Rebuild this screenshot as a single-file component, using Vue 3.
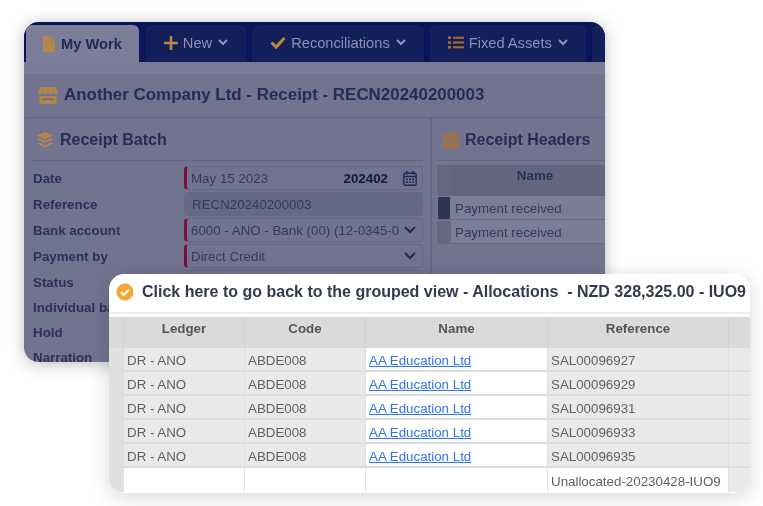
<script setup>
const nav = [
  { label: 'New', icon: 'plus' },
  { label: 'Reconciliations', icon: 'check' },
  { label: 'Fixed Assets', icon: 'list' },
]
const fields = [
  { label: 'Date', value: 'May 15 2023', kind: 'date', req: true },
  { label: 'Reference', value: 'RECN20240200003', kind: 'ro' },
  { label: 'Bank account', value: '6000 - ANO - Bank (00) (12-0345-0', kind: 'sel', req: true },
  { label: 'Payment by', value: 'Direct Credit', kind: 'sel', req: true },
  { label: 'Status', value: '', kind: 'plain' },
  { label: 'Individual bank', value: '', kind: 'plain', tight: true },
  { label: 'Hold', value: '', kind: 'plain', tight: true },
  { label: 'Narration', value: '', kind: 'plain', tight: true },
]
const refs = ['SAL00096927', 'SAL00096929', 'SAL00096931', 'SAL00096933', 'SAL00096935']
</script>

<template>
  <div class="stage">
    <section class="win back">
      <nav class="bar">
        <div class="tab active">
          <svg class="ic" width="12" height="16" viewBox="0 0 12 16"><path d="M0 1.5A1.5 1.5 0 0 1 1.5 0H7v4.5H12V14.5A1.5 1.5 0 0 1 10.5 16h-9A1.500 1.500 0 0 1 0 14.500zM8 0l4 3.600H8z" fill="#b3864a"/></svg>
          <span>My Work</span>
        </div>
        <div v-for="n in nav" :key="n.label" class="tab">
          <svg v-if="n.icon === 'plus'" class="ic" width="14" height="14" viewBox="0 0 14 14"><path d="M7 0v14M0 7h14" stroke="#b98a3c" stroke-width="2.6"/></svg>
          <svg v-else-if="n.icon === 'check'" class="ic" width="16" height="13" viewBox="0 0 16 13"><path d="M1.500 6.500l4.600 4.600L14.500 2" fill="none" stroke="#b98a3c" stroke-width="3"/></svg>
          <svg v-else class="ic" width="16" height="13" viewBox="0 0 16 13"><path d="M0 .5h3v2.400H0zM0 5.300h3v2.400H0zM0 10.100h3v2.400H0z" fill="#ad6a32"/><path d="M5 1.700h11M5 6.500h11M5 11.300h11" stroke="#ad6a32" stroke-width="2"/></svg>
          <span class="tl">{{ n.label }}</span>
          <svg class="chev" width="10" height="7" viewBox="0 0 10 7"><path d="M1 1l4 4 4-4" fill="none" stroke="#9296b4" stroke-width="2"/></svg>
        </div>
        <div class="tab stub"></div>
      </nav>
      <div class="band"></div>
      <div class="page">
        <h1 class="title">
          <svg width="20" height="17" viewBox="0 0 20 17"><path d="M2.500 0h15L20 5a2.600 2.600 0 0 1-5 .6 2.800 2.800 0 0 1-5 0 2.800 2.800 0 0 1-5 0A2.600 2.600 0 0 1 0 5z" fill="#b3864a"/><path d="M1.500 9h17v6.500a1.500 1.500 0 0 1-1.500 1.500H3a1.500 1.500 0 0 1-1.500-1.500zM4 11.200v2h12v-2z" fill="#b3864a"/></svg>
          <span>Another Company Ltd - Receipt - RECN20240200003</span>
        </h1>
        <div class="cols">
          <div class="batch">
            <h2 class="sub">
              <svg width="16" height="16" viewBox="0 0 16 16"><path d="M8 0l8 3.600-8 3.600L0 3.600z" fill="#b3864a"/><path d="M0 7.300l2.200-1 5.800 2.600 5.800-2.600 2.200 1-8 3.600z" fill="#b3864a"/><path d="M0 11.600l2.200-1 5.800 2.600 5.800-2.600 2.200 1-8 3.900z" fill="#b3864a"/></svg>
              <span>Receipt Batch</span>
            </h2>
            <div v-for="f in fields" :key="f.label" class="row" :class="{ tight: f.tight }">
              <label class="lab">{{ f.label }}</label>
              <div v-if="f.kind !== 'plain'" class="inp" :class="[f.kind, { req: f.req }]">
                <span class="val">{{ f.value }}</span>
                <template v-if="f.kind === 'date'">
                  <b class="period">202402</b>
                  <svg width="14" height="15" viewBox="0 0 14 15"><rect x=".8" y="2.300" width="12.400" height="11.900" rx="1.500" fill="none" stroke="#1e2a58" stroke-width="1.400"/><path d="M.8 5.500h12.400" stroke="#1e2a58" stroke-width="1.600"/><path d="M3.700 0v3.500M10.300 0v3.500" stroke="#1e2a58" stroke-width="1.600"/><path d="M3 7.500h2v1.400H3zM6 7.500h2v1.400H6zM9 7.500h2v1.400H9zM3 10.300h2v1.400H3zM6 10.300h2v1.400H6zM9 10.300h2v1.400H9z" fill="#1e2a58"/></svg>
                </template>
                <svg v-if="f.kind === 'sel'" class="selchev" width="12" height="8" viewBox="0 0 12 8"><path d="M1 1l5 5 5-5" fill="none" stroke="#1e2a58" stroke-width="2"/></svg>
              </div>
              <div v-else-if="f.label === 'Status'" class="inp"></div>
            </div>
          </div>
          <div class="headers">
            <h2 class="sub">
              <svg width="16" height="15" viewBox="0 0 16 15"><path d="M0 0h4.600v4.200H0zM5.700 0h4.600v4.200H5.700zM11.400 0H16v4.200h-4.600zM0 5.400h4.600v4.200H0zM5.700 5.400h4.600v4.200H5.700zM11.400 5.400H16v4.200h-4.600zM0 10.800h4.600V15H0zM5.700 10.800h4.600V15H5.700zM11.400 10.800H16V15h-4.600z" fill="#a9702f"/></svg>
              <span>Receipt Headers</span>
            </h2>
            <div class="hgrid">
              <div class="hhead"><i></i><b>Name</b></div>
              <div class="hrow"><i class="mark"></i><span>Payment received</span></div>
              <div class="hrow"><i></i><span>Payment received</span></div>
            </div>
          </div>
        </div>
      </div>
    </section>

    <section class="win front">
      <header class="fhead">
        <svg width="18" height="18" viewBox="0 0 18 18"><circle cx="9" cy="9" r="8.500" fill="#f5a733"/><path d="M5 9.300l2.800 2.700L13 6.600" fill="none" stroke="#fff" stroke-width="2"/></svg>
        <span>Click here to go back to the grouped view - Allocations&nbsp; - NZD 328,325.00 - IUO9</span>
      </header>
      <div class="grid">
        <div class="gr gh">
          <i></i><b>Ledger</b><b>Code</b><b>Name</b><b>Reference</b><em></em>
        </div>
        <div v-for="r in refs" :key="r" class="gr">
          <i></i><span>DR - ANO</span><span>ABDE008</span><span class="nm"><a href="#">AA Education Ltd</a></span><span>{{ r }}</span><em></em>
        </div>
        <div class="gr last">
          <i></i><span></span><span></span><span></span><span>Unallocated-20230428-IUO9</span><em></em>
        </div>
      </div>
    </section>
  </div>
</template>

<style scoped>
.stage {
  position: relative;
  width: 763px;
  height: 506px;
  overflow: hidden;
  background: #fff;
  font-family: "Liberation Sans", Arial, sans-serif;
  filter: blur(.3px);
}
.win {
  position: absolute;
  overflow: hidden;
  border-radius: 15px;
}
.back {
  left: 24px;
  top: 22px;
  width: 581px;
  height: 340px;
  background: #72738f;
  box-shadow: 0 2px 16px rgba(30, 30, 50, .3);
}
.front {
  left: 109px;
  top: 274px;
  width: 641px;
  height: 219px;
  background: #fff;
  box-shadow: 0 4px 20px rgba(0, 0, 0, .16);
}
.bar {
  display: flex;
  gap: 6px;
  height: 40px;
  padding: 3px 0 0 2px;
  box-sizing: border-box;
  background: #0a1659;
}
.tab {
  flex: none;
  display: flex;
  align-items: center;
  gap: 5px;
  padding: 0 18px 2px;
  border-radius: 6px 6px 0 0;
  background: #13205c;
  color: #8d91b0;
  font-size: 14.670px;
}
.tab.active {
  margin-right: 1px;
  padding: 0 17px;
  gap: 6px;
  background: #7c7d99;
  color: #222a58;
  font-weight: 700;
}
.tab.stub {
  flex: 1;
  padding: 0;
}
.tl {
  margin-right: 1px;
}
.band {
  height: 12px;
  background: #7a7b96;
}
.page {
  margin-left: 2px;
  border-radius: 4px 0 0 0;
  background: #72738f;
}
.title {
  display: flex;
  align-items: center;
  gap: 6px;
  height: 44px;
  margin: 0;
  padding: 0 0 1px 12px;
  box-sizing: border-box;
  border-bottom: 1px solid #62648a;
  color: #262c55;
  font-size: 16.930px;
  font-weight: 700;
}
.cols {
  display: flex;
}
.batch {
  flex: none;
  box-sizing: border-box;
  width: 406px;
  padding: 0 7px 0 5px;
  border-right: 2px solid #666886;
}
.sub {
  display: flex;
  align-items: center;
  gap: 7px;
  height: 43px;
  margin: 0 0 4px;
  padding: 2px 0 0 6px;
  box-sizing: border-box;
  border-bottom: 1px solid #62648a;
  color: #262c55;
  font-size: 16px;
  font-weight: 700;
}
.row {
  display: flex;
  align-items: center;
  height: 26px;
}
.row.tight {
  height: 25px;
}
.lab {
  flex: none;
  box-sizing: border-box;
  width: 153px;
  padding-left: 2px;
  color: #2c3158;
  font-size: 13.330px;
  font-weight: 700;
}
.inp {
  flex: 1;
  min-width: 0;
  display: flex;
  align-items: center;
  box-sizing: border-box;
  height: 24px;
  padding: 0 5px 0 7px;
  border: 1px solid #666886;
  border-radius: 4px;
  color: #363a5e;
  font-size: 13.330px;
}
.inp.ro {
  background: #666983;
}
.inp.req {
  border-left: 3px solid #7d0f3c;
  padding-left: 4px;
}
.val {
  flex: 1;
  min-width: 0;
  overflow: hidden;
  white-space: nowrap;
}
.period {
  margin-right: 15px;
  color: #13183a;
  font-size: 13.330px;
}
.selchev {
  flex: none;
  margin: 0 1px 0 5px;
}
.headers {
  flex: 1;
  min-width: 0;
}
.headers .sub {
  gap: 6px;
  margin: 0 0 4px 5px;
}
.hgrid {
  margin-left: 5px;
  color: #363a5e;
  font-size: 13.330px;
}
.hhead,
.hrow {
  display: flex;
  align-items: center;
  white-space: nowrap;
}
.hhead {
  height: 31px;
  align-items: flex-start;
  background: #64667f;
  color: #2c3158;
}
.hhead b {
  flex: none;
  width: 168px;
  padding-top: 3px;
  text-align: center;
}
.hhead i,
.hrow i {
  flex: none;
  align-self: stretch;
  width: 14px;
  background: #666880;
}
.hrow {
  height: 24px;
  padding-top: 1px;
  border-bottom: 1px solid #686a84;
  box-sizing: border-box;
  background: #7b7c96;
}
.hrow span {
  padding-left: 4px;
}
.hrow i.mark {
  width: 12px;
  margin: 0 1px 0 1px;
  background: #2e3450;
}
.fhead {
  display: flex;
  align-items: center;
  gap: 8px;
  height: 40px;
  padding: 0 0 3px 7px;
  box-sizing: border-box;
  border-bottom: 2px solid #ececec;
  color: #333a4d;
  font-size: 16px;
  font-weight: 700;
  white-space: nowrap;
}
.grid {
  margin-top: 3px;
  color: #606060;
  font-size: 13.330px;
}
.gr {
  display: grid;
  grid-template-columns: 14px 121px 121px 182px 181px 22px;
  height: 24px;
  box-sizing: border-box;
  border-bottom: 2px solid #dedede;
  background: #e9e9e9;
}
.gr > i {
  background: #e0e0e0;
}
.gr > em {
  background: #e9e9e9;
  border-left: 1px solid #dedede;
}
.gr > span {
  display: flex;
  align-items: center;
  padding: 3px 0 0 3px;
  border-left: 1px solid #dedede;
}
.gr .nm {
  background: #fff;
}
.gr a {
  color: #2f74f0;
}
.gh {
  height: 31px;
  border-bottom: 0;
  background: #dadada;
}
.gh > b {
  padding-top: 4px;
  border-left: 1px solid #d0d0d0;
  color: #555;
  text-align: center;
}
.gh > em {
  background: #dadada;
  border-color: #d0d0d0;
}
.gh > i {
  background: #dadada;
}
.last {
  border-bottom: 0;
  background: #fff;
}
.last > span {
  border-left-color: #e4e4e4;
}
.last > em {
  background: #e9e9e9;
}
</style>
